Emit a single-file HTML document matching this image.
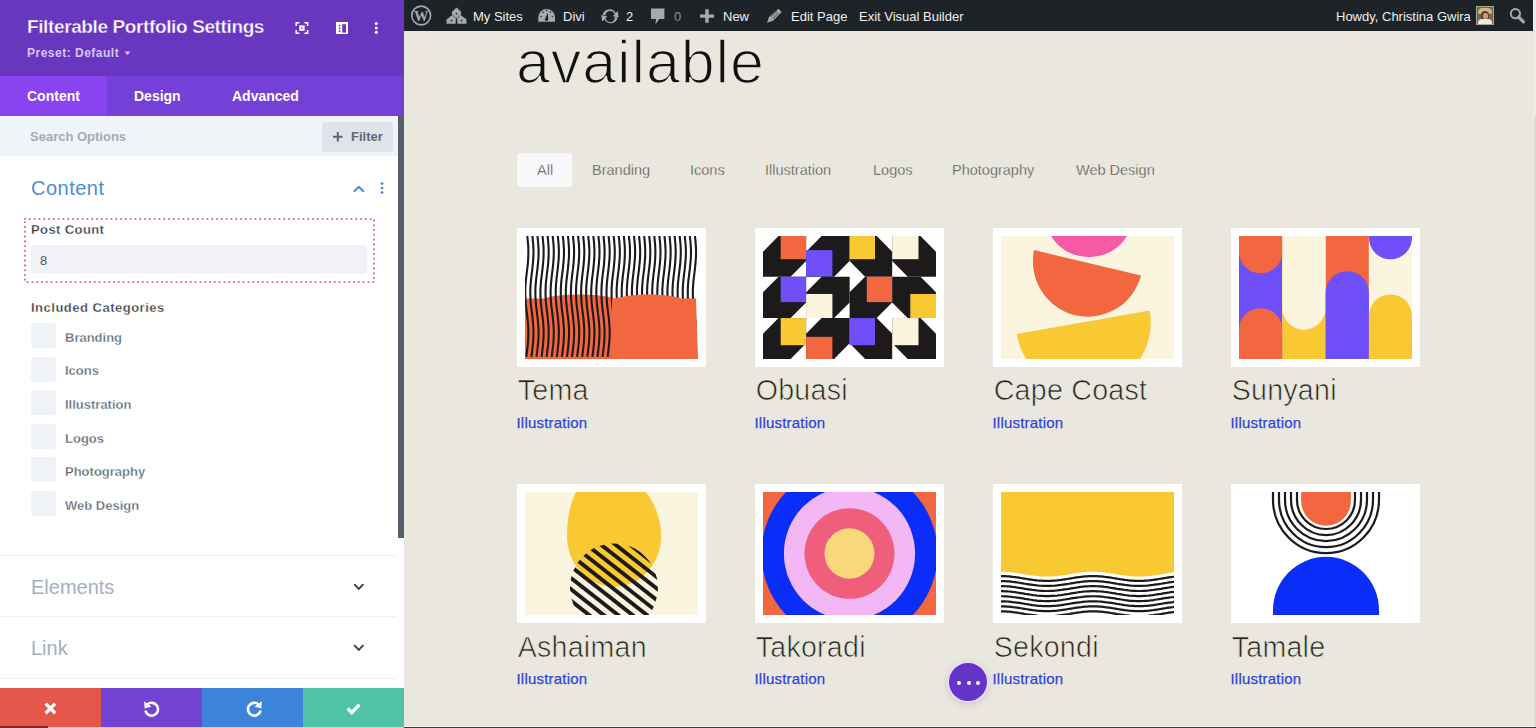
<!DOCTYPE html>
<html><head><meta charset="utf-8">
<style>
*{box-sizing:border-box;margin:0;padding:0}
html,body{width:1536px;height:728px;overflow:hidden;background:#eae8de;font-family:"Liberation Sans",sans-serif}
.a{position:absolute;white-space:nowrap;line-height:1}
#panel{position:absolute;left:0;top:0;width:404px;height:728px;background:#fff;overflow:hidden}
#hdr{position:absolute;left:0;top:0;width:404px;height:76px;background:#6936c0}
#tabs{position:absolute;left:0;top:76px;width:404px;height:40px;background:#7540d7}
#tabact{position:absolute;left:0;top:0;width:107px;height:40px;background:#8944f0}
#search{position:absolute;left:0;top:116px;width:398px;height:40px;background:#f0f3f8}
#filterbtn{position:absolute;left:322px;top:122px;width:71px;height:30px;background:#dfe3ea;border-radius:3px}
#sb{position:absolute;left:398px;top:116px;width:6px;height:422px;background:#545e6c}
.sep{position:absolute;left:0;width:396px;height:1px;background:#eef0f3}
.cb{position:absolute;left:31px;width:25px;height:25px;background:#eff2f7;border-radius:3px}
.cbl{position:absolute;left:65px;font-size:13px;font-weight:700;color:#5a6675;-webkit-text-stroke:0.3px #fff;line-height:1;white-space:nowrap}
.btn{position:absolute;top:688px;width:101px;height:40px}
#admin{position:absolute;left:404px;top:0;width:1129px;height:31px;background:#1d2327}
.ab{position:absolute;top:10px;font-size:13px;color:#f0f0f1;line-height:1;white-space:nowrap}
.ftab{position:absolute;top:163px;font-size:14.5px;color:#444;-webkit-text-stroke:0.35px #eae8de;line-height:1;white-space:nowrap}
.card{position:absolute;width:189px;height:139px;background:#fff}
.card svg{position:absolute;left:8px;top:8px}
.ttl{position:absolute;font-size:28.6px;color:#262422;-webkit-text-stroke:0.7px #eae8de;line-height:1;white-space:nowrap;letter-spacing:0.25px;margin-left:0.7px}
.lnk{position:absolute;font-size:15px;color:#3044dc;-webkit-text-stroke:0.25px #3044dc;line-height:1;white-space:nowrap;letter-spacing:0.2px;margin-left:-0.5px}
</style></head><body>
<div id="panel">
  <div id="hdr">
    <div class="a" style="left:27px;top:17px;font-size:19px;font-weight:700;color:#fff;letter-spacing:-0.38px;-webkit-text-stroke:0.35px #6936c0">Filterable Portfolio Settings</div>
    <div class="a" style="left:27px;top:46.5px;font-size:12px;font-weight:700;color:#d7c4f5;letter-spacing:0.5px">Preset: Default</div>
  </div>
  <div id="tabs">
    <div id="tabact"></div>
    <div class="a" style="left:27px;top:12.5px;font-size:14px;font-weight:700;color:#fff">Content</div>
    <div class="a" style="left:134px;top:12.5px;font-size:14px;font-weight:700;color:#fff">Design</div>
    <div class="a" style="left:232px;top:12.5px;font-size:14px;font-weight:700;color:#fff">Advanced</div>
  </div>
  <div id="search">
    <div class="a" style="left:30px;top:14px;font-size:13px;font-weight:700;color:#a3abb8">Search Options</div>
  </div>
  <div id="filterbtn">
    <div class="a" style="left:29px;top:8px;font-size:13px;font-weight:700;color:#5e6978">Filter</div>
  </div>
  <div class="a" style="left:31px;top:177.5px;font-size:20px;color:#4a8cd4;letter-spacing:0.5px">Content</div>
  <svg style="position:absolute;left:0;top:0" width="404" height="300"><rect x="25" y="219" width="349" height="63" fill="none" stroke="#e06a74" stroke-width="2.1" stroke-dasharray="0 4.8" stroke-linecap="round"/></svg>
  <div class="a" style="left:31px;top:222.5px;font-size:13px;font-weight:700;color:#2e3640;letter-spacing:0.4px;-webkit-text-stroke:0.3px #fff">Post Count</div>
  <div style="position:absolute;left:31px;top:245px;width:336px;height:29px;background:#f0f2f7;border-radius:3px"></div>
  <div class="a" style="left:40px;top:253.5px;font-size:13px;color:#4c5866">8</div>
  <div class="a" style="left:31px;top:301px;font-size:13px;font-weight:700;color:#2e3640;letter-spacing:0.5px;-webkit-text-stroke:0.3px #fff">Included Categories</div>
  <div class="cb" style="top:323px"></div><div class="cbl" style="top:330.7px">Branding</div>
  <div class="cb" style="top:356.6px"></div><div class="cbl" style="top:364.3px">Icons</div>
  <div class="cb" style="top:390.2px"></div><div class="cbl" style="top:397.9px">Illustration</div>
  <div class="cb" style="top:423.8px"></div><div class="cbl" style="top:431.5px">Logos</div>
  <div class="cb" style="top:457.4px"></div><div class="cbl" style="top:465.1px">Photography</div>
  <div class="cb" style="top:491px"></div><div class="cbl" style="top:498.7px">Web Design</div>
  <div id="sb"></div>
<svg style="position:absolute;left:0;top:0;z-index:5" width="404" height="728" viewBox="0 0 404 728">
  <!-- header icons -->
  <g fill="none" stroke="#fff" stroke-width="1.5">
    <path d="M296.2,26 V22.8 H299.4 M304.4,22.8 H307.6 V26 M307.6,30 V33.2 H304.4 M299.4,33.2 H296.2 V30"/>
  </g>
  <rect x="299.2" y="25.4" width="5.4" height="5.4" fill="#fff"/>
  <rect x="301.2" y="27.4" width="1.4" height="1.4" fill="#6a36c0"/>
  <rect x="336" y="22" width="12" height="12" fill="#fff"/>
  <rect x="338.8" y="24.8" width="1.6" height="1.6" fill="#6a36c0"/>
  <rect x="338.8" y="27.6" width="1.6" height="1.6" fill="#6a36c0"/>
  <rect x="338.8" y="30.4" width="1.6" height="1.6" fill="#6a36c0"/>
  <rect x="342.2" y="24.2" width="3.8" height="8.4" fill="#6a36c0"/>
  <circle cx="376.3" cy="23.6" r="1.5" fill="#fff"/>
  <circle cx="376.3" cy="27.9" r="1.5" fill="#fff"/>
  <circle cx="376.3" cy="32.2" r="1.5" fill="#fff"/>
  <!-- preset arrow -->
  <path d="M124.5,51.5 H130.5 L127.5,55 Z" fill="#d9c8f5"/>
  <!-- filter plus -->
  <path d="M337.8,132 V141.4 M333,136.7 H342.6" stroke="#5b6574" stroke-width="2"/>
  <!-- content chevron & kebab -->
  <path d="M353.8,191.8 L358.8,186.8 L363.8,191.8" fill="none" stroke="#4a8ad4" stroke-width="2"/>
  <circle cx="382" cy="183.6" r="1.4" fill="#4a8ad4"/>
  <circle cx="382" cy="188.1" r="1.4" fill="#4a8ad4"/>
  <circle cx="382" cy="192.6" r="1.4" fill="#4a8ad4"/>
  <!-- elements/link chevrons -->
  <path d="M354.2,584.2 L358.8,588.8 L363.4,584.2" fill="none" stroke="#333e4c" stroke-width="1.9"/>
  <path d="M354.2,645.2 L358.8,649.8 L363.4,645.2" fill="none" stroke="#333e4c" stroke-width="1.9"/>
  <!-- bottom bar -->
  <rect x="0" y="727" width="404" height="1" fill="#f3c8c8" opacity="0.9"/><rect x="0" y="726" width="48" height="2" fill="#7a2a22"/>
  <path d="M45.6,703.6 L55.2,713.2 M55.2,703.6 L45.6,713.2" stroke="#fff" stroke-width="3.4"/>
  <path d="M147.2,704.6 A6.4,6.4 0 1 1 145.4,710.6" fill="none" stroke="#fff" stroke-width="2.6"/>
  <path d="M144.2,701.2 L144.6,708.6 L151.6,706.6 Z" fill="#fff"/>
  <path d="M258.8,704.6 A6.4,6.4 0 1 0 260.6,710.6" fill="none" stroke="#fff" stroke-width="2.6"/>
  <path d="M261.8,701.2 L261.4,708.6 L254.4,706.6 Z" fill="#fff"/>
  <path d="M347.6,708.6 L351.8,712.6 L359.4,704.6" fill="none" stroke="#fff" stroke-width="3.4"/>
</svg>
  <div class="sep" style="top:555px"></div>
  <div class="a" style="left:31px;top:577px;font-size:20px;color:#a3afc0">Elements</div>
  <div class="sep" style="top:616px"></div>
  <div class="a" style="left:31px;top:638px;font-size:20px;color:#a3afc0">Link</div>
  <div class="sep" style="top:678px"></div>
  <div class="btn" style="left:0;background:#e5564b"></div>
  <div class="btn" style="left:101px;background:#7343d3"></div>
  <div class="btn" style="left:202px;background:#3b84da"></div>
  <div class="btn" style="left:303px;width:101px;background:#4fc3a5"></div>
</div>
<div id="admin"></div>
<div style="position:absolute;left:1533px;top:0;width:3px;height:728px;background:#efede6"></div>
<div style="position:absolute;left:1534px;top:116px;width:2px;height:612px;background:#dcdad3"></div>
<svg style="position:absolute;left:404px;top:0" width="1129" height="31" viewBox="404 0 1129 31">
  <!-- WP logo -->
  <circle cx="421.2" cy="15.5" r="9.4" fill="none" stroke="#a7aaad" stroke-width="1.6"/>
  <text x="421.3" y="20.6" font-family="Liberation Serif" font-weight="700" font-size="14.5" fill="#a7aaad" text-anchor="middle">W</text>
  <!-- My Sites houses -->
  <path d="M456.5,7.5 L461,11.8 L461,15.2 L466.5,19.6 L466.5,23.8 L457.3,23.8 L457.3,19.2 L456.5,18.5 L455.7,19.2 L455.7,23.8 L446.5,23.8 L446.5,19.6 L452,15.2 L452,11.8 Z" fill="#a7aaad"/>
  <path d="M456.5,12 L454.2,14.2 L454.2,16.4 L456.5,18.2 L458.8,16.4 L458.8,14.2 Z" fill="#1d2327" opacity="0.0"/>
  <circle cx="456.5" cy="13.7" r="0.9" fill="#1d2327"/>
  <circle cx="451.5" cy="20.6" r="0.9" fill="#1d2327"/>
  <circle cx="461.5" cy="20.6" r="0.9" fill="#1d2327"/>
  <path d="M456,18.5 L457,18.5 L457,23.8 L456,23.8 Z" fill="#1d2327"/>
  <path d="M452.3,15.2 L456.5,18.6 L460.7,15.2" fill="none" stroke="#1d2327" stroke-width="0.6"/>
  <!-- Divi gauge -->
  <path d="M538.3,21.8 L538.3,17.3 A8.35,8.35 0 0 1 555,17.3 L555,21.8 Z" fill="#a7aaad"/>
  <circle cx="541" cy="16.5" r="0.8" fill="#1d2327"/><circle cx="543" cy="12.3" r="0.8" fill="#1d2327"/>
  <circle cx="546.7" cy="10.6" r="0.8" fill="#1d2327"/><circle cx="550.4" cy="12.3" r="0.8" fill="#1d2327"/>
  <circle cx="552.4" cy="16.5" r="0.8" fill="#1d2327"/>
  <path d="M547.8,12.8 L545.2,18.6 A1.6,1.6 0 1 0 548.2,19.2 Z" fill="#1d2327"/>
  <!-- updates -->
  <path d="M602.6,14.8 A7,7 0 0 1 615.6,13 L617.8,11.3 L618.6,17.6 L612.6,16.2 L614.6,14.6 A4.6,4.6 0 0 0 605.5,15.6 Z" fill="#a7aaad"/>
  <path d="M617.6,17.6 A7,7 0 0 1 604.6,19.6 L602.2,21.3 L601.2,15 L607.4,16.4 L605.6,18 A4.6,4.6 0 0 0 614.8,17 Z" fill="#a7aaad"/>
  <!-- comment -->
  <path d="M651,8.5 H664.4 V19 H659.2 L655.4,24.4 L656,19 H651 Z" fill="#a7aaad"/>
  <!-- plus -->
  <path d="M705.3,9.3 H708.7 V14.4 H714 V17.8 H708.7 V22.8 H705.3 V17.8 H700 V14.4 H705.3 Z" fill="#a7aaad"/>
  <!-- pencil -->
  <path d="M778.4,8.8 L781.7,12 L773,20.8 L767,22.8 L769,17 Z" fill="#a7aaad"/>
  <path d="M771,16.8 L776.8,11 M772.8,18.6 L778.6,12.8" stroke="#1d2327" stroke-width="0.8"/>
  <!-- search -->
  <circle cx="1515.4" cy="13.7" r="4.6" fill="none" stroke="#a7aaad" stroke-width="2"/>
  <path d="M1518.6,17 L1523.4,21.8" stroke="#a7aaad" stroke-width="3.2" stroke-linecap="round"/>
</svg>
<!-- avatar -->
<div style="position:absolute;left:1476px;top:6px;width:18px;height:19px;background:#a9a58a;overflow:hidden">
  <div style="position:absolute;left:1px;top:1px;width:16px;height:17px;background:#6f6b52"></div>
  <div style="position:absolute;left:2px;top:2px;width:14px;height:6px;border-radius:7px 7px 3px 3px;background:#cdb98a"></div>
  <div style="position:absolute;left:5px;top:5px;width:8px;height:10px;border-radius:4px;background:#6a3c2a"></div>
  <div style="position:absolute;left:6.5px;top:6.5px;width:5px;height:6px;border-radius:3px;background:#c99a88"></div>
  <div style="position:absolute;left:2px;top:13px;width:14px;height:5px;border-radius:4px 4px 0 0;background:#e8eaf0"></div>
</div>
<div style="position:absolute;left:404px;top:727px;width:1132px;height:1px;background:#3c3f3f"></div>
<div style="position:absolute;left:404px;top:726px;width:1129px;height:1px;background:#f2f1ec"></div>
<div class="ab" style="left:473px">My Sites</div>
<div class="ab" style="left:563px">Divi</div>
<div class="ab" style="left:626px">2</div>
<div class="ab" style="left:674px;color:#8c8f94">0</div>
<div class="ab" style="left:723px">New</div>
<div class="ab" style="left:791px">Edit Page</div>
<div class="ab" style="left:859px">Exit Visual Builder</div>
<div class="ab" style="left:1336px">Howdy, Christina Gwira</div>
<div class="a" style="left:516px;top:32px;font-size:61px;color:#111;letter-spacing:0.9px;-webkit-text-stroke:1.6px #eae8de">available</div>
<div style="position:absolute;left:517px;top:153px;width:55px;height:34px;background:#f8f8f8;border-radius:3px"></div>
<div class="ftab" style="left:537px;-webkit-text-stroke:0.35px #f8f8f8">All</div>
<div class="ftab" style="left:592px">Branding</div>
<div class="ftab" style="left:690px">Icons</div>
<div class="ftab" style="left:765px">Illustration</div>
<div class="ftab" style="left:873px">Logos</div>
<div class="ftab" style="left:952px">Photography</div>
<div class="ftab" style="left:1076px">Web Design</div>

<div class="card" style="left:517px;top:228px"><svg width="173" height="123" viewBox="0 0 173 122" preserveAspectRatio="none"><rect width="173" height="123" fill="#fff"/><path d="M0,122 L0,62 L3,62 L6,62 L9,62 L12,62 L15,62 L18,62 L21,61.4 L24,60.6 L27,60 L30,59.5 L33,59.2 L36,58.8 L39,58.6 L42,58.4 L45,58.2 L48,58.1 L51,58 L54,58 L57,58 L60,58.1 L63,58.2 L66,58.4 L69,58.6 L72,58.8 L75,59.2 L78,59.5 L81,60 L84,60.6 L87,61.4 L90,62 L90,122 Z" fill="#f2673f"/><path d="M2.3,0 L2.7,4 L3.1,8 L3.3,12 L3.4,16 L3.3,20 L3.1,24 L2.8,28 L2.3,32 L1.8,36 L1.3,40 L0.9,44 L0.5,48 L0.3,52 L0.2,56 L0.3,60 L0.5,64 L0.8,68 L1.3,72 L1.8,76 L2.3,80 L2.7,84 L3.1,88 L3.3,92 L3.4,96 L3.3,100 L3.1,104 L2.8,108 L2.3,112 L1.8,116 L1.3,120" stroke="#1c1a1b" stroke-width="2.1" fill="none"/><path d="M7.4,0 L7.8,4 L8.2,8 L8.4,12 L8.5,16 L8.4,20 L8.2,24 L7.8,28 L7.4,32 L6.9,36 L6.4,40 L6,44 L5.6,48 L5.4,52 L5.3,56 L5.4,60 L5.6,64 L5.9,68 L6.4,72 L6.9,76 L7.4,80 L7.8,84 L8.2,88 L8.4,92 L8.5,96 L8.4,100 L8.2,104 L7.8,108 L7.4,112 L6.9,116 L6.4,120" stroke="#1c1a1b" stroke-width="2.1" fill="none"/><path d="M12.4,0 L12.9,4 L13.2,8 L13.5,12 L13.6,16 L13.5,20 L13.3,24 L12.9,28 L12.5,32 L12,36 L11.5,40 L11,44 L10.7,48 L10.4,52 L10.4,56 L10.4,60 L10.7,64 L11,68 L11.4,72 L11.9,76 L12.4,80 L12.9,84 L13.2,88 L13.5,92 L13.6,96 L13.5,100 L13.3,104 L12.9,108 L12.5,112 L12,116 L11.5,120" stroke="#1c1a1b" stroke-width="2.1" fill="none"/><path d="M17.5,0 L18,4 L18.3,8 L18.6,12 L18.6,16 L18.6,20 L18.3,24 L18,28 L17.6,32 L17.1,36 L16.6,40 L16.1,44 L15.8,48 L15.5,52 L15.4,56 L15.5,60 L15.7,64 L16.1,68 L16.5,72 L17,76 L17.5,80 L18,84 L18.3,88 L18.6,92 L18.6,96 L18.6,100 L18.3,104 L18,108 L17.6,112 L17.1,116 L16.6,120" stroke="#1c1a1b" stroke-width="2.1" fill="none"/><path d="M22.6,0 L23,4 L23.4,8 L23.6,12 L23.7,16 L23.6,20 L23.4,24 L23.1,28 L22.6,32 L22.1,36 L21.6,40 L21.2,44 L20.8,48 L20.6,52 L20.5,56 L20.6,60 L20.8,64 L21.2,68 L21.6,72 L22.1,76 L22.6,80 L23,84 L23.4,88 L23.6,92 L23.7,96 L23.6,100 L23.4,104 L23.1,108 L22.6,112 L22.1,116 L21.6,120" stroke="#1c1a1b" stroke-width="2.1" fill="none"/><path d="M27.7,0 L28.1,4 L28.5,8 L28.7,12 L28.8,16 L28.7,20 L28.5,24 L28.2,28 L27.7,32 L27.2,36 L26.7,40 L26.3,44 L25.9,48 L25.7,52 L25.6,56 L25.7,60 L25.9,64 L26.2,68 L26.7,72 L27.2,76 L27.7,80 L28.1,84 L28.5,88 L28.7,92 L28.8,96 L28.7,100 L28.5,104 L28.2,108 L27.7,112 L27.2,116 L26.7,120" stroke="#1c1a1b" stroke-width="2.1" fill="none"/><path d="M32.8,0 L33.2,4 L33.6,8 L33.8,12 L33.9,16 L33.8,20 L33.6,24 L33.2,28 L32.8,32 L32.3,36 L31.8,40 L31.4,44 L31,48 L30.8,52 L30.7,56 L30.8,60 L31,64 L31.3,68 L31.8,72 L32.3,76 L32.8,80 L33.2,84 L33.6,88 L33.8,92 L33.9,96 L33.8,100 L33.6,104 L33.2,108 L32.8,112 L32.3,116 L31.8,120" stroke="#1c1a1b" stroke-width="2.1" fill="none"/><path d="M37.8,0 L38.3,4 L38.6,8 L38.9,12 L39,16 L38.9,20 L38.7,24 L38.3,28 L37.9,32 L37.4,36 L36.9,40 L36.4,44 L36.1,48 L35.8,52 L35.8,56 L35.8,60 L36.1,64 L36.4,68 L36.8,72 L37.3,76 L37.8,80 L38.3,84 L38.6,88 L38.9,92 L39,96 L38.9,100 L38.7,104 L38.3,108 L37.9,112 L37.4,116 L36.9,120" stroke="#1c1a1b" stroke-width="2.1" fill="none"/><path d="M42.9,0 L43.4,4 L43.7,8 L44,12 L44,16 L44,20 L43.7,24 L43.4,28 L43,32 L42.5,36 L42,40 L41.5,44 L41.2,48 L40.9,52 L40.8,56 L40.9,60 L41.1,64 L41.5,68 L41.9,72 L42.4,76 L42.9,80 L43.4,84 L43.7,88 L44,92 L44,96 L44,100 L43.7,104 L43.4,108 L43,112 L42.5,116 L42,120" stroke="#1c1a1b" stroke-width="2.1" fill="none"/><path d="M48,0 L48.4,4 L48.8,8 L49,12 L49.1,16 L49,20 L48.8,24 L48.5,28 L48,32 L47.5,36 L47,40 L46.6,44 L46.2,48 L46,52 L45.9,56 L46,60 L46.2,64 L46.6,68 L47,72 L47.5,76 L48,80 L48.4,84 L48.8,88 L49,92 L49.1,96 L49,100 L48.8,104 L48.5,108 L48,112 L47.5,116 L47,120" stroke="#1c1a1b" stroke-width="2.1" fill="none"/><path d="M53.1,0 L53.5,4 L53.9,8 L54.1,12 L54.2,16 L54.1,20 L53.9,24 L53.6,28 L53.1,32 L52.6,36 L52.1,40 L51.7,44 L51.3,48 L51.1,52 L51,56 L51.1,60 L51.3,64 L51.6,68 L52.1,72 L52.6,76 L53.1,80 L53.5,84 L53.9,88 L54.1,92 L54.2,96 L54.1,100 L53.9,104 L53.6,108 L53.1,112 L52.6,116 L52.1,120" stroke="#1c1a1b" stroke-width="2.1" fill="none"/><path d="M58.2,0 L58.6,4 L59,8 L59.2,12 L59.3,16 L59.2,20 L59,24 L58.6,28 L58.2,32 L57.7,36 L57.2,40 L56.8,44 L56.4,48 L56.2,52 L56.1,56 L56.2,60 L56.4,64 L56.7,68 L57.2,72 L57.7,76 L58.2,80 L58.6,84 L59,88 L59.2,92 L59.3,96 L59.2,100 L59,104 L58.6,108 L58.2,112 L57.7,116 L57.2,120" stroke="#1c1a1b" stroke-width="2.1" fill="none"/><path d="M63.2,0 L63.7,4 L64,8 L64.3,12 L64.4,16 L64.3,20 L64.1,24 L63.7,28 L63.3,32 L62.8,36 L62.3,40 L61.8,44 L61.5,48 L61.2,52 L61.2,56 L61.2,60 L61.5,64 L61.8,68 L62.2,72 L62.7,76 L63.2,80 L63.7,84 L64,88 L64.3,92 L64.4,96 L64.3,100 L64.1,104 L63.7,108 L63.3,112 L62.8,116 L62.3,120" stroke="#1c1a1b" stroke-width="2.1" fill="none"/><path d="M68.3,0 L68.8,4 L69.1,8 L69.4,12 L69.4,16 L69.4,20 L69.1,24 L68.8,28 L68.4,32 L67.9,36 L67.4,40 L66.9,44 L66.6,48 L66.3,52 L66.2,56 L66.3,60 L66.5,64 L66.9,68 L67.3,72 L67.8,76 L68.3,80 L68.8,84 L69.1,88 L69.4,92 L69.4,96 L69.4,100 L69.1,104 L68.8,108 L68.4,112 L67.9,116 L67.4,120" stroke="#1c1a1b" stroke-width="2.1" fill="none"/><path d="M73.4,0 L73.8,4 L74.2,8 L74.4,12 L74.5,16 L74.4,20 L74.2,24 L73.9,28 L73.4,32 L72.9,36 L72.4,40 L72,44 L71.6,48 L71.4,52 L71.3,56 L71.4,60 L71.6,64 L72,68 L72.4,72 L72.9,76 L73.4,80 L73.8,84 L74.2,88 L74.4,92 L74.5,96 L74.4,100 L74.2,104 L73.9,108 L73.4,112 L72.9,116 L72.4,120" stroke="#1c1a1b" stroke-width="2.1" fill="none"/><path d="M78.5,0 L78.9,4 L79.3,8 L79.5,12 L79.6,16 L79.5,20 L79.3,24 L79,28 L78.5,32 L78,36 L77.5,40 L77.1,44 L76.7,48 L76.5,52 L76.4,56 L76.5,60 L76.7,64 L77,68 L77.5,72 L78,76 L78.5,80 L78.9,84 L79.3,88 L79.5,92 L79.6,96 L79.5,100 L79.3,104 L79,108 L78.5,112 L78,116 L77.5,120" stroke="#1c1a1b" stroke-width="2.1" fill="none"/><path d="M83.6,0 L84,4 L84.4,8 L84.6,12 L84.7,16 L84.6,20 L84.4,24 L84,28 L83.6,32 L83.1,36 L82.6,40 L82.2,44 L81.8,48 L81.6,52 L81.5,56 L81.6,60 L81.8,64 L82.1,68 L82.6,72 L83.1,76 L83.6,80 L84,84 L84.4,88 L84.6,92 L84.7,96 L84.6,100 L84.4,104 L84,108 L83.6,112 L83.1,116 L82.6,120" stroke="#1c1a1b" stroke-width="2.1" fill="none"/><path d="M88.6,0 L89.1,4 L89.4,8 L89.7,12 L89.8,16 L89.7,20 L89.5,24 L89.1,28 L88.7,32 L88.2,36 L87.7,40 L87.2,44 L86.9,48 L86.6,52 L86.6,56 L86.6,60 L86.9,64 L87.2,68 L87.6,72 L88.1,76 L88.6,80 L89.1,84 L89.4,88 L89.7,92 L89.8,96 L89.7,100 L89.5,104 L89.1,108 L88.7,112 L88.2,116 L87.7,120" stroke="#1c1a1b" stroke-width="2.1" fill="none"/><path d="M93.7,0 L94.2,4 L94.5,8 L94.8,12 L94.8,16 L94.8,20 L94.5,24 L94.2,28 L93.8,32 L93.3,36 L92.8,40 L92.3,44 L92,48 L91.7,52 L91.6,56 L91.7,60 L91.9,64 L92.3,68 L92.7,72 L93.2,76 L93.7,80 L94.2,84 L94.5,88 L94.8,92 L94.8,96 L94.8,100 L94.5,104 L94.2,108 L93.8,112 L93.3,116 L92.8,120" stroke="#1c1a1b" stroke-width="2.1" fill="none"/><path d="M98.8,0 L99.2,4 L99.6,8 L99.8,12 L99.9,16 L99.8,20 L99.6,24 L99.3,28 L98.8,32 L98.3,36 L97.8,40 L97.4,44 L97,48 L96.8,52 L96.7,56 L96.8,60 L97,64 L97.4,68 L97.8,72 L98.3,76 L98.8,80 L99.2,84 L99.6,88 L99.8,92 L99.9,96 L99.8,100 L99.6,104 L99.3,108 L98.8,112 L98.3,116 L97.8,120" stroke="#1c1a1b" stroke-width="2.1" fill="none"/><path d="M103.9,0 L104.3,4 L104.7,8 L104.9,12 L105,16 L104.9,20 L104.7,24 L104.4,28 L103.9,32 L103.4,36 L102.9,40 L102.5,44 L102.1,48 L101.9,52 L101.8,56 L101.9,60 L102.1,64 L102.4,68 L102.9,72 L103.4,76 L103.9,80 L104.3,84 L104.7,88 L104.9,92 L105,96 L104.9,100 L104.7,104 L104.4,108 L103.9,112 L103.4,116 L102.9,120" stroke="#1c1a1b" stroke-width="2.1" fill="none"/><path d="M109,0 L109.4,4 L109.8,8 L110,12 L110.1,16 L110,20 L109.8,24 L109.4,28 L109,32 L108.5,36 L108,40 L107.6,44 L107.2,48 L107,52 L106.9,56 L107,60 L107.2,64 L107.5,68 L108,72 L108.5,76 L109,80 L109.4,84 L109.8,88 L110,92 L110.1,96 L110,100 L109.8,104 L109.4,108 L109,112 L108.5,116 L108,120" stroke="#1c1a1b" stroke-width="2.1" fill="none"/><path d="M114,0 L114.5,4 L114.8,8 L115.1,12 L115.2,16 L115.1,20 L114.9,24 L114.5,28 L114.1,32 L113.6,36 L113.1,40 L112.6,44 L112.3,48 L112,52 L112,56 L112,60 L112.3,64 L112.6,68 L113,72 L113.5,76 L114,80 L114.5,84 L114.8,88 L115.1,92 L115.2,96 L115.1,100 L114.9,104 L114.5,108 L114.1,112 L113.6,116 L113.1,120" stroke="#1c1a1b" stroke-width="2.1" fill="none"/><path d="M119.1,0 L119.6,4 L119.9,8 L120.2,12 L120.2,16 L120.2,20 L119.9,24 L119.6,28 L119.2,32 L118.7,36 L118.2,40 L117.7,44 L117.4,48 L117.1,52 L117,56 L117.1,60 L117.3,64 L117.7,68 L118.1,72 L118.6,76 L119.1,80 L119.6,84 L119.9,88 L120.2,92 L120.2,96 L120.2,100 L119.9,104 L119.6,108 L119.2,112 L118.7,116 L118.2,120" stroke="#1c1a1b" stroke-width="2.1" fill="none"/><path d="M124.2,0 L124.6,4 L125,8 L125.2,12 L125.3,16 L125.2,20 L125,24 L124.7,28 L124.2,32 L123.7,36 L123.2,40 L122.8,44 L122.4,48 L122.2,52 L122.1,56 L122.2,60 L122.4,64 L122.8,68 L123.2,72 L123.7,76 L124.2,80 L124.6,84 L125,88 L125.2,92 L125.3,96 L125.2,100 L125,104 L124.7,108 L124.2,112 L123.7,116 L123.2,120" stroke="#1c1a1b" stroke-width="2.1" fill="none"/><path d="M129.3,0 L129.7,4 L130.1,8 L130.3,12 L130.4,16 L130.3,20 L130.1,24 L129.8,28 L129.3,32 L128.8,36 L128.3,40 L127.9,44 L127.5,48 L127.3,52 L127.2,56 L127.3,60 L127.5,64 L127.8,68 L128.3,72 L128.8,76 L129.3,80 L129.7,84 L130.1,88 L130.3,92 L130.4,96 L130.3,100 L130.1,104 L129.8,108 L129.3,112 L128.8,116 L128.3,120" stroke="#1c1a1b" stroke-width="2.1" fill="none"/><path d="M134.4,0 L134.8,4 L135.2,8 L135.4,12 L135.5,16 L135.4,20 L135.2,24 L134.8,28 L134.4,32 L133.9,36 L133.4,40 L133,44 L132.6,48 L132.4,52 L132.3,56 L132.4,60 L132.6,64 L132.9,68 L133.4,72 L133.9,76 L134.4,80 L134.8,84 L135.2,88 L135.4,92 L135.5,96 L135.4,100 L135.2,104 L134.8,108 L134.4,112 L133.9,116 L133.4,120" stroke="#1c1a1b" stroke-width="2.1" fill="none"/><path d="M139.4,0 L139.9,4 L140.2,8 L140.5,12 L140.6,16 L140.5,20 L140.3,24 L139.9,28 L139.5,32 L139,36 L138.5,40 L138,44 L137.7,48 L137.4,52 L137.4,56 L137.4,60 L137.7,64 L138,68 L138.4,72 L138.9,76 L139.4,80 L139.9,84 L140.2,88 L140.5,92 L140.6,96 L140.5,100 L140.3,104 L139.9,108 L139.5,112 L139,116 L138.5,120" stroke="#1c1a1b" stroke-width="2.1" fill="none"/><path d="M144.5,0 L145,4 L145.3,8 L145.6,12 L145.6,16 L145.6,20 L145.3,24 L145,28 L144.6,32 L144.1,36 L143.6,40 L143.1,44 L142.8,48 L142.5,52 L142.4,56 L142.5,60 L142.7,64 L143.1,68 L143.5,72 L144,76 L144.5,80 L145,84 L145.3,88 L145.6,92 L145.6,96 L145.6,100 L145.3,104 L145,108 L144.6,112 L144.1,116 L143.6,120" stroke="#1c1a1b" stroke-width="2.1" fill="none"/><path d="M149.6,0 L150,4 L150.4,8 L150.6,12 L150.7,16 L150.6,20 L150.4,24 L150.1,28 L149.6,32 L149.1,36 L148.6,40 L148.2,44 L147.8,48 L147.6,52 L147.5,56 L147.6,60 L147.8,64 L148.2,68 L148.6,72 L149.1,76 L149.6,80 L150,84 L150.4,88 L150.6,92 L150.7,96 L150.6,100 L150.4,104 L150.1,108 L149.6,112 L149.1,116 L148.6,120" stroke="#1c1a1b" stroke-width="2.1" fill="none"/><path d="M154.7,0 L155.1,4 L155.5,8 L155.7,12 L155.8,16 L155.7,20 L155.5,24 L155.2,28 L154.7,32 L154.2,36 L153.7,40 L153.3,44 L152.9,48 L152.7,52 L152.6,56 L152.7,60 L152.9,64 L153.2,68 L153.7,72 L154.2,76 L154.7,80 L155.1,84 L155.5,88 L155.7,92 L155.8,96 L155.7,100 L155.5,104 L155.2,108 L154.7,112 L154.2,116 L153.7,120" stroke="#1c1a1b" stroke-width="2.1" fill="none"/><path d="M159.8,0 L160.2,4 L160.6,8 L160.8,12 L160.9,16 L160.8,20 L160.6,24 L160.2,28 L159.8,32 L159.3,36 L158.8,40 L158.4,44 L158,48 L157.8,52 L157.7,56 L157.8,60 L158,64 L158.3,68 L158.8,72 L159.3,76 L159.8,80 L160.2,84 L160.6,88 L160.8,92 L160.9,96 L160.8,100 L160.6,104 L160.2,108 L159.8,112 L159.3,116 L158.8,120" stroke="#1c1a1b" stroke-width="2.1" fill="none"/><path d="M164.8,0 L165.3,4 L165.6,8 L165.9,12 L166,16 L165.9,20 L165.7,24 L165.3,28 L164.9,32 L164.4,36 L163.9,40 L163.4,44 L163.1,48 L162.8,52 L162.8,56 L162.8,60 L163.1,64 L163.4,68 L163.8,72 L164.3,76 L164.8,80 L165.3,84 L165.6,88 L165.9,92 L166,96 L165.9,100 L165.7,104 L165.3,108 L164.9,112 L164.4,116 L163.9,120" stroke="#1c1a1b" stroke-width="2.1" fill="none"/><path d="M169.9,0 L170.4,4 L170.7,8 L171,12 L171,16 L171,20 L170.7,24 L170.4,28 L170,32 L169.5,36 L169,40 L168.5,44 L168.2,48 L167.9,52 L167.8,56 L167.9,60 L168.1,64 L168.5,68 L168.9,72 L169.4,76 L169.9,80 L170.4,84 L170.7,88 L171,92 L171,96 L171,100 L170.7,104 L170.4,108 L170,112 L169.5,116 L169,120" stroke="#1c1a1b" stroke-width="2.1" fill="none"/><path d="M87,122 L87,61.4 L90,62 L93,61.3 L96,60.5 L99,59.9 L102,59.4 L105,59 L108,58.7 L111,58.5 L114,58.3 L117,58.1 L120,58 L123,58 L126,58 L129,58.1 L132,58.2 L135,58.4 L138,58.6 L141,58.9 L144,59.3 L147,59.7 L150,60.3 L153,61 L156,62 L159,62 L162,62 L165,62 L168,62 L171,62 L173,122 Z" fill="#f2673f"/></svg></div>
<div class="card" style="left:755px;top:228px"><svg width="173" height="123" viewBox="0 0 173 122" preserveAspectRatio="none"><rect width="173" height="123" fill="#fff"/><path d="M15.5,0 L43.1,0 L43.1,24.9 L27.6,40.4 L0,40.4 L0,15.5Z" fill="#1c1a1b"/><rect x="17.7" y="0" width="25.4" height="23" fill="#f2673f"/><path d="M58.6,0 L86.6,0 L86.6,24.9 L71.1,40.4 L43.1,40.4 L43.1,15.5Z" fill="#1c1a1b"/><rect x="43.1" y="14" width="26.3" height="26.2" fill="#6f4ffa"/><path d="M86.6,0 L113.7,0 L129.2,15.5 L129.2,40.4 L102.1,40.4 L86.6,24.9Z" fill="#1c1a1b"/><rect x="86.6" y="0" width="25.4" height="23" fill="#f8c933"/><path d="M129.2,0 L157.5,0 L173,15.5 L173,40.4 L144.7,40.4 L129.2,24.9Z" fill="#1c1a1b"/><rect x="129.2" y="0" width="26.3" height="23" fill="#fbf4de"/><path d="M15.5,40.4 L43.1,40.4 L43.1,65.9 L27.6,81.4 L0,81.4 L0,55.9Z" fill="#1c1a1b"/><rect x="17.7" y="40.4" width="25.4" height="25.2" fill="#6f4ffa"/><path d="M58.6,40.4 L86.6,40.4 L86.6,65.9 L71.1,81.4 L43.1,81.4 L43.1,55.9Z" fill="#1c1a1b"/><rect x="43.1" y="57.5" width="26.3" height="23.9" fill="#fbf4de"/><path d="M102.1,40.4 L129.2,40.4 L129.2,65.9 L113.7,81.4 L86.6,81.4 L86.6,55.9Z" fill="#1c1a1b"/><rect x="103.8" y="40.4" width="25.4" height="25.2" fill="#f2673f"/><path d="M129.2,40.4 L157.5,40.4 L173,55.9 L173,81.4 L144.7,81.4 L129.2,65.9Z" fill="#1c1a1b"/><rect x="147.3" y="57.5" width="25.7" height="23.9" fill="#f8c933"/><path d="M15.5,81.4 L43.1,81.4 L43.1,106.5 L27.6,122 L0,122 L0,96.9Z" fill="#1c1a1b"/><rect x="17.7" y="81.4" width="25.4" height="26.9" fill="#f8c933"/><path d="M58.6,81.4 L86.6,81.4 L86.6,106.5 L71.1,122 L43.1,122 L43.1,96.9Z" fill="#1c1a1b"/><rect x="43.1" y="100" width="26.3" height="22" fill="#f2673f"/><path d="M86.6,81.4 L113.7,81.4 L129.2,96.9 L129.2,122 L102.1,122 L86.6,106.5Z" fill="#1c1a1b"/><rect x="86.6" y="81.4" width="25.4" height="26.9" fill="#6f4ffa"/><path d="M129.2,81.4 L157.5,81.4 L173,96.9 L173,122 L144.7,122 L129.2,106.5Z" fill="#1c1a1b"/><rect x="129.2" y="81.4" width="26.3" height="26.9" fill="#fbf4de"/></svg></div>
<div class="card" style="left:993px;top:228px"><svg width="173" height="123" viewBox="0 0 173 122" preserveAspectRatio="none"><rect width="173" height="123" fill="#fbf4de"/><circle cx="88" cy="-23.9" r="44.9" fill="#f55aa5"/><path d="M33,14 L140,39.3 A55,55 0 0 1 33,14 Z" fill="#f2673f"/><path d="M15.7,97.3 L148.7,74 A67.5,67.5 0 0 1 15.7,97.3 Z" fill="#f8c933"/></svg></div>
<div class="card" style="left:1231px;top:228px"><svg width="173" height="123" viewBox="0 0 173 122" preserveAspectRatio="none"><rect x="0" width="43.3" height="123" fill="#6f4ffa"/><rect x="43.3" width="43.3" height="123" fill="#f8c933"/><rect x="86.6" width="43.3" height="123" fill="#f2673f"/><rect x="129.9" width="43.1" height="123" fill="#fbf4de"/><path d="M0,0 H43.3 V15.4 A21.65,21.65 0 0 1 0,15.4 Z" fill="#f2673f"/><path d="M0,122 V93.2 A21.65,21.65 0 0 1 43.3,93.2 V122 Z" fill="#f2673f"/><path d="M43.3,0 H86.6 V71.3 A21.65,21.65 0 0 1 43.3,71.3 Z" fill="#fbf4de"/><path d="M86.6,122 V56.5 A21.65,21.65 0 0 1 129.9,56.5 V122 Z" fill="#6f4ffa"/><path d="M129.9,0 H173 V1.6 A21.55,21.55 0 0 1 129.9,1.6 Z" fill="#6f4ffa"/><path d="M129.9,122 V79.5 A21.55,21.55 0 0 1 173,79.5 V122 Z" fill="#f8c933"/></svg></div>
<div class="card" style="left:517px;top:484px"><svg width="173" height="123" viewBox="0 0 173 122" preserveAspectRatio="none"><defs><clipPath id="ac"><circle cx="89" cy="95" r="44"/></clipPath></defs><rect width="173" height="123" fill="#fbf4de"/><path d="M51,0 C45,12 42,26 42,44 C42,72 63,94 89,94 C115,94 136,72 136,44 C136,26 130,12 121,0 Z" fill="#f8c933"/><g clip-path="url(#ac)"><line x1="66.1" y1="10.6" x2="176.4" y2="96.8" stroke="#1c1a1b" stroke-width="3.9"/><line x1="60.6" y1="17.6" x2="170.9" y2="103.8" stroke="#1c1a1b" stroke-width="3.9"/><line x1="55.1" y1="24.6" x2="165.5" y2="110.8" stroke="#1c1a1b" stroke-width="3.9"/><line x1="49.7" y1="31.7" x2="160" y2="117.8" stroke="#1c1a1b" stroke-width="3.9"/><line x1="44.2" y1="38.7" x2="154.5" y2="124.9" stroke="#1c1a1b" stroke-width="3.9"/><line x1="38.7" y1="45.7" x2="149" y2="131.9" stroke="#1c1a1b" stroke-width="3.9"/><line x1="33.2" y1="52.7" x2="143.5" y2="138.9" stroke="#1c1a1b" stroke-width="3.9"/><line x1="27.7" y1="59.7" x2="138.1" y2="145.9" stroke="#1c1a1b" stroke-width="3.9"/><line x1="22.3" y1="66.7" x2="132.6" y2="152.9" stroke="#1c1a1b" stroke-width="3.9"/><line x1="16.8" y1="73.7" x2="127.1" y2="159.9" stroke="#1c1a1b" stroke-width="3.9"/><line x1="11.3" y1="80.7" x2="121.6" y2="166.9" stroke="#1c1a1b" stroke-width="3.9"/><line x1="5.8" y1="87.8" x2="116.1" y2="174" stroke="#1c1a1b" stroke-width="3.9"/><line x1="0.3" y1="94.8" x2="110.7" y2="181" stroke="#1c1a1b" stroke-width="3.9"/></g></svg></div>
<div class="card" style="left:755px;top:484px"><svg width="173" height="123" viewBox="0 0 173 122" preserveAspectRatio="none"><rect width="173" height="123" fill="#f2673f"/><circle cx="86.5" cy="61" r="88" fill="#0a2df7"/><circle cx="86.5" cy="61" r="65.6" fill="#f4b7f6"/><circle cx="86.5" cy="61" r="45" fill="#ef5f7b"/><circle cx="86.5" cy="61" r="25" fill="#f9d77b"/></svg></div>
<div class="card" style="left:993px;top:484px"><svg width="173" height="123" viewBox="0 0 173 122" preserveAspectRatio="none"><rect width="173" height="123" fill="#fff"/><path d="M0,0 H173 V79.6 L174,79.6 L172,79.9 L170,80.1 L168,80.4 L166,80.7 L164,81 L162,81.3 L160,81.7 L158,82 L156,82.3 L154,82.6 L152,82.9 L150,83.1 L148,83.4 L146,83.6 L144,83.7 L142,83.8 L140,83.9 L138,83.9 L136,83.9 L134,83.8 L132,83.7 L130,83.6 L128,83.4 L126,83.1 L124,82.9 L122,82.6 L120,82.3 L118,82 L116,81.7 L114,81.3 L112,81 L110,80.7 L108,80.4 L106,80.1 L104,79.9 L102,79.6 L100,79.4 L98,79.3 L96,79.2 L94,79.1 L92,79.1 L90,79.1 L88,79.2 L86,79.3 L84,79.4 L82,79.6 L80,79.9 L78,80.1 L76,80.4 L74,80.7 L72,81 L70,81.3 L68,81.7 L66,82 L64,82.3 L62,82.6 L60,82.9 L58,83.1 L56,83.4 L54,83.6 L52,83.7 L50,83.8 L48,83.9 L46,83.9 L44,83.9 L42,83.8 L40,83.7 L38,83.6 L36,83.4 L34,83.1 L32,82.9 L30,82.6 L28,82.3 L26,82 L24,81.7 L22,81.3 L20,81 L18,80.7 L16,80.4 L14,80.1 L12,79.9 L10,79.6 L8,79.4 L6,79.3 L4,79.2 L2,79.1 L0,79.1 Z" fill="#f8c933"/><path d="M0,83.4 L2,83.4 L4,83.5 L6,83.6 L8,83.7 L10,83.9 L12,84.2 L14,84.4 L16,84.7 L18,85 L20,85.3 L22,85.6 L24,86 L26,86.3 L28,86.6 L30,86.9 L32,87.2 L34,87.4 L36,87.7 L38,87.9 L40,88 L42,88.1 L44,88.2 L46,88.2 L48,88.2 L50,88.1 L52,88 L54,87.9 L56,87.7 L58,87.4 L60,87.2 L62,86.9 L64,86.6 L66,86.3 L68,86 L70,85.6 L72,85.3 L74,85 L76,84.7 L78,84.4 L80,84.2 L82,83.9 L84,83.7 L86,83.6 L88,83.5 L90,83.4 L92,83.4 L94,83.4 L96,83.5 L98,83.6 L100,83.7 L102,83.9 L104,84.2 L106,84.4 L108,84.7 L110,85 L112,85.3 L114,85.6 L116,86 L118,86.3 L120,86.6 L122,86.9 L124,87.2 L126,87.4 L128,87.7 L130,87.9 L132,88 L134,88.1 L136,88.2 L138,88.2 L140,88.2 L142,88.1 L144,88 L146,87.9 L148,87.7 L150,87.4 L152,87.2 L154,86.9 L156,86.6 L158,86.3 L160,86 L162,85.6 L164,85.3 L166,85 L168,84.7 L170,84.4 L172,84.2 L174,83.9" stroke="#1c1a1b" stroke-width="2.2" fill="none"/><path d="M0,88.4 L2,88.4 L4,88.5 L6,88.6 L8,88.7 L10,88.9 L12,89.2 L14,89.4 L16,89.7 L18,90 L20,90.3 L22,90.6 L24,91 L26,91.3 L28,91.6 L30,91.9 L32,92.2 L34,92.4 L36,92.7 L38,92.9 L40,93 L42,93.1 L44,93.2 L46,93.2 L48,93.2 L50,93.1 L52,93 L54,92.9 L56,92.7 L58,92.4 L60,92.2 L62,91.9 L64,91.6 L66,91.3 L68,91 L70,90.6 L72,90.3 L74,90 L76,89.7 L78,89.4 L80,89.2 L82,88.9 L84,88.7 L86,88.6 L88,88.5 L90,88.4 L92,88.4 L94,88.4 L96,88.5 L98,88.6 L100,88.7 L102,88.9 L104,89.2 L106,89.4 L108,89.7 L110,90 L112,90.3 L114,90.6 L116,91 L118,91.3 L120,91.6 L122,91.9 L124,92.2 L126,92.4 L128,92.7 L130,92.9 L132,93 L134,93.1 L136,93.2 L138,93.2 L140,93.2 L142,93.1 L144,93 L146,92.9 L148,92.7 L150,92.4 L152,92.2 L154,91.9 L156,91.6 L158,91.3 L160,91 L162,90.6 L164,90.3 L166,90 L168,89.7 L170,89.4 L172,89.2 L174,88.9" stroke="#1c1a1b" stroke-width="2.2" fill="none"/><path d="M0,93.4 L2,93.4 L4,93.5 L6,93.6 L8,93.7 L10,93.9 L12,94.2 L14,94.4 L16,94.7 L18,95 L20,95.3 L22,95.6 L24,96 L26,96.3 L28,96.6 L30,96.9 L32,97.2 L34,97.4 L36,97.7 L38,97.9 L40,98 L42,98.1 L44,98.2 L46,98.2 L48,98.2 L50,98.1 L52,98 L54,97.9 L56,97.7 L58,97.4 L60,97.2 L62,96.9 L64,96.6 L66,96.3 L68,96 L70,95.6 L72,95.3 L74,95 L76,94.7 L78,94.4 L80,94.2 L82,93.9 L84,93.7 L86,93.6 L88,93.5 L90,93.4 L92,93.4 L94,93.4 L96,93.5 L98,93.6 L100,93.7 L102,93.9 L104,94.2 L106,94.4 L108,94.7 L110,95 L112,95.3 L114,95.6 L116,96 L118,96.3 L120,96.6 L122,96.9 L124,97.2 L126,97.4 L128,97.7 L130,97.9 L132,98 L134,98.1 L136,98.2 L138,98.2 L140,98.2 L142,98.1 L144,98 L146,97.9 L148,97.7 L150,97.4 L152,97.2 L154,96.9 L156,96.6 L158,96.3 L160,96 L162,95.6 L164,95.3 L166,95 L168,94.7 L170,94.4 L172,94.2 L174,93.9" stroke="#1c1a1b" stroke-width="2.2" fill="none"/><path d="M0,98.4 L2,98.4 L4,98.5 L6,98.6 L8,98.7 L10,98.9 L12,99.2 L14,99.4 L16,99.7 L18,100 L20,100.3 L22,100.6 L24,101 L26,101.3 L28,101.6 L30,101.9 L32,102.2 L34,102.4 L36,102.7 L38,102.9 L40,103 L42,103.1 L44,103.2 L46,103.2 L48,103.2 L50,103.1 L52,103 L54,102.9 L56,102.7 L58,102.4 L60,102.2 L62,101.9 L64,101.6 L66,101.3 L68,101 L70,100.6 L72,100.3 L74,100 L76,99.7 L78,99.4 L80,99.2 L82,98.9 L84,98.7 L86,98.6 L88,98.5 L90,98.4 L92,98.4 L94,98.4 L96,98.5 L98,98.6 L100,98.7 L102,98.9 L104,99.2 L106,99.4 L108,99.7 L110,100 L112,100.3 L114,100.6 L116,101 L118,101.3 L120,101.6 L122,101.9 L124,102.2 L126,102.4 L128,102.7 L130,102.9 L132,103 L134,103.1 L136,103.2 L138,103.2 L140,103.2 L142,103.1 L144,103 L146,102.9 L148,102.7 L150,102.4 L152,102.2 L154,101.9 L156,101.6 L158,101.3 L160,101 L162,100.6 L164,100.3 L166,100 L168,99.7 L170,99.4 L172,99.2 L174,98.9" stroke="#1c1a1b" stroke-width="2.2" fill="none"/><path d="M0,103.4 L2,103.4 L4,103.5 L6,103.6 L8,103.7 L10,103.9 L12,104.2 L14,104.4 L16,104.7 L18,105 L20,105.3 L22,105.6 L24,106 L26,106.3 L28,106.6 L30,106.9 L32,107.2 L34,107.4 L36,107.7 L38,107.9 L40,108 L42,108.1 L44,108.2 L46,108.2 L48,108.2 L50,108.1 L52,108 L54,107.9 L56,107.7 L58,107.4 L60,107.2 L62,106.9 L64,106.6 L66,106.3 L68,106 L70,105.6 L72,105.3 L74,105 L76,104.7 L78,104.4 L80,104.2 L82,103.9 L84,103.7 L86,103.6 L88,103.5 L90,103.4 L92,103.4 L94,103.4 L96,103.5 L98,103.6 L100,103.7 L102,103.9 L104,104.2 L106,104.4 L108,104.7 L110,105 L112,105.3 L114,105.6 L116,106 L118,106.3 L120,106.6 L122,106.9 L124,107.2 L126,107.4 L128,107.7 L130,107.9 L132,108 L134,108.1 L136,108.2 L138,108.2 L140,108.2 L142,108.1 L144,108 L146,107.9 L148,107.7 L150,107.4 L152,107.2 L154,106.9 L156,106.6 L158,106.3 L160,106 L162,105.6 L164,105.3 L166,105 L168,104.7 L170,104.4 L172,104.2 L174,103.9" stroke="#1c1a1b" stroke-width="2.2" fill="none"/><path d="M0,108.4 L2,108.4 L4,108.5 L6,108.6 L8,108.7 L10,108.9 L12,109.2 L14,109.4 L16,109.7 L18,110 L20,110.3 L22,110.6 L24,111 L26,111.3 L28,111.6 L30,111.9 L32,112.2 L34,112.4 L36,112.7 L38,112.9 L40,113 L42,113.1 L44,113.2 L46,113.2 L48,113.2 L50,113.1 L52,113 L54,112.9 L56,112.7 L58,112.4 L60,112.2 L62,111.9 L64,111.6 L66,111.3 L68,111 L70,110.6 L72,110.3 L74,110 L76,109.7 L78,109.4 L80,109.2 L82,108.9 L84,108.7 L86,108.6 L88,108.5 L90,108.4 L92,108.4 L94,108.4 L96,108.5 L98,108.6 L100,108.7 L102,108.9 L104,109.2 L106,109.4 L108,109.7 L110,110 L112,110.3 L114,110.6 L116,111 L118,111.3 L120,111.6 L122,111.9 L124,112.2 L126,112.4 L128,112.7 L130,112.9 L132,113 L134,113.1 L136,113.2 L138,113.2 L140,113.2 L142,113.1 L144,113 L146,112.9 L148,112.7 L150,112.4 L152,112.2 L154,111.9 L156,111.6 L158,111.3 L160,111 L162,110.6 L164,110.3 L166,110 L168,109.7 L170,109.4 L172,109.2 L174,108.9" stroke="#1c1a1b" stroke-width="2.2" fill="none"/><path d="M0,113.4 L2,113.4 L4,113.5 L6,113.6 L8,113.7 L10,113.9 L12,114.2 L14,114.4 L16,114.7 L18,115 L20,115.3 L22,115.6 L24,116 L26,116.3 L28,116.6 L30,116.9 L32,117.2 L34,117.4 L36,117.7 L38,117.9 L40,118 L42,118.1 L44,118.2 L46,118.2 L48,118.2 L50,118.1 L52,118 L54,117.9 L56,117.7 L58,117.4 L60,117.2 L62,116.9 L64,116.6 L66,116.3 L68,116 L70,115.6 L72,115.3 L74,115 L76,114.7 L78,114.4 L80,114.2 L82,113.9 L84,113.7 L86,113.6 L88,113.5 L90,113.4 L92,113.4 L94,113.4 L96,113.5 L98,113.6 L100,113.7 L102,113.9 L104,114.2 L106,114.4 L108,114.7 L110,115 L112,115.3 L114,115.6 L116,116 L118,116.3 L120,116.6 L122,116.9 L124,117.2 L126,117.4 L128,117.7 L130,117.9 L132,118 L134,118.1 L136,118.2 L138,118.2 L140,118.2 L142,118.1 L144,118 L146,117.9 L148,117.7 L150,117.4 L152,117.2 L154,116.9 L156,116.6 L158,116.3 L160,116 L162,115.6 L164,115.3 L166,115 L168,114.7 L170,114.4 L172,114.2 L174,113.9" stroke="#1c1a1b" stroke-width="2.2" fill="none"/><path d="M0,118.4 L2,118.4 L4,118.5 L6,118.6 L8,118.7 L10,118.9 L12,119.2 L14,119.4 L16,119.7 L18,120 L20,120.3 L22,120.6 L24,121 L26,121.3 L28,121.6 L30,121.9 L32,122.2 L34,122.4 L36,122.7 L38,122.9 L40,123 L42,123.1 L44,123.2 L46,123.2 L48,123.2 L50,123.1 L52,123 L54,122.9 L56,122.7 L58,122.4 L60,122.2 L62,121.9 L64,121.6 L66,121.3 L68,121 L70,120.6 L72,120.3 L74,120 L76,119.7 L78,119.4 L80,119.2 L82,118.9 L84,118.7 L86,118.6 L88,118.5 L90,118.4 L92,118.4 L94,118.4 L96,118.5 L98,118.6 L100,118.7 L102,118.9 L104,119.2 L106,119.4 L108,119.7 L110,120 L112,120.3 L114,120.6 L116,121 L118,121.3 L120,121.6 L122,121.9 L124,122.2 L126,122.4 L128,122.7 L130,122.9 L132,123 L134,123.1 L136,123.2 L138,123.2 L140,123.2 L142,123.1 L144,123 L146,122.9 L148,122.7 L150,122.4 L152,122.2 L154,121.9 L156,121.6 L158,121.3 L160,121 L162,120.6 L164,120.3 L166,120 L168,119.7 L170,119.4 L172,119.2 L174,118.9" stroke="#1c1a1b" stroke-width="2.2" fill="none"/></svg></div>
<div class="card" style="left:1231px;top:484px"><svg width="173" height="123" viewBox="0 0 173 122" preserveAspectRatio="none"><rect width="173" height="123" fill="#fff"/><path d="M58,-2 V7.7 A29,29 0 0 0 116,7.7 V-2" stroke="#1c1a1b" stroke-width="2.2" fill="none"/><path d="M52,-2 V7.7 A35,35 0 0 0 122,7.7 V-2" stroke="#1c1a1b" stroke-width="2.2" fill="none"/><path d="M46,-2 V7.7 A41,41 0 0 0 128,7.7 V-2" stroke="#1c1a1b" stroke-width="2.2" fill="none"/><path d="M40,-2 V7.7 A47,47 0 0 0 134,7.7 V-2" stroke="#1c1a1b" stroke-width="2.2" fill="none"/><path d="M34,-2 V7.7 A53,53 0 0 0 140,7.7 V-2" stroke="#1c1a1b" stroke-width="2.2" fill="none"/><path d="M62.1,0 H111.9 V8.6 A24.9,24.9 0 0 1 62.1,8.6 Z" fill="#f2673f"/><path d="M34,122 V117.3 A53,53 0 0 1 140,117.3 V122 Z" fill="#0a2df7"/></svg></div>

<div class="ttl" style="left:517px;top:376.1px">Tema</div>
<div class="ttl" style="left:755px;top:376.1px">Obuasi</div>
<div class="ttl" style="left:993px;top:376.1px">Cape Coast</div>
<div class="ttl" style="left:1231px;top:376.1px">Sunyani</div>
<div class="ttl" style="left:517px;top:633.4px">Ashaiman</div>
<div class="ttl" style="left:755px;top:633.4px">Takoradi</div>
<div class="ttl" style="left:993px;top:633.4px">Sekondi</div>
<div class="ttl" style="left:1231px;top:633.4px">Tamale</div>

<div class="lnk" style="left:517px;top:414.5px">Illustration</div>
<div class="lnk" style="left:755px;top:414.5px">Illustration</div>
<div class="lnk" style="left:993px;top:414.5px">Illustration</div>
<div class="lnk" style="left:1231px;top:414.5px">Illustration</div>
<div class="lnk" style="left:517px;top:670.5px">Illustration</div>
<div class="lnk" style="left:755px;top:670.5px">Illustration</div>
<div class="lnk" style="left:993px;top:670.5px">Illustration</div>
<div class="lnk" style="left:1231px;top:670.5px">Illustration</div>

<div style="position:absolute;left:947.4px;top:661.1px;width:42px;height:42px;border-radius:50%;background:#6534c9;border:2px solid #e9dcfb;box-shadow:0 2px 6px rgba(0,0,0,0.12)"></div>
<div style="position:absolute;left:957px;top:681px;width:4px;height:4px;border-radius:50%;background:#fff"></div>
<div style="position:absolute;left:966.5px;top:681px;width:4px;height:4px;border-radius:50%;background:#fff"></div>
<div style="position:absolute;left:976px;top:681px;width:4px;height:4px;border-radius:50%;background:#fff"></div>
</body></html>
